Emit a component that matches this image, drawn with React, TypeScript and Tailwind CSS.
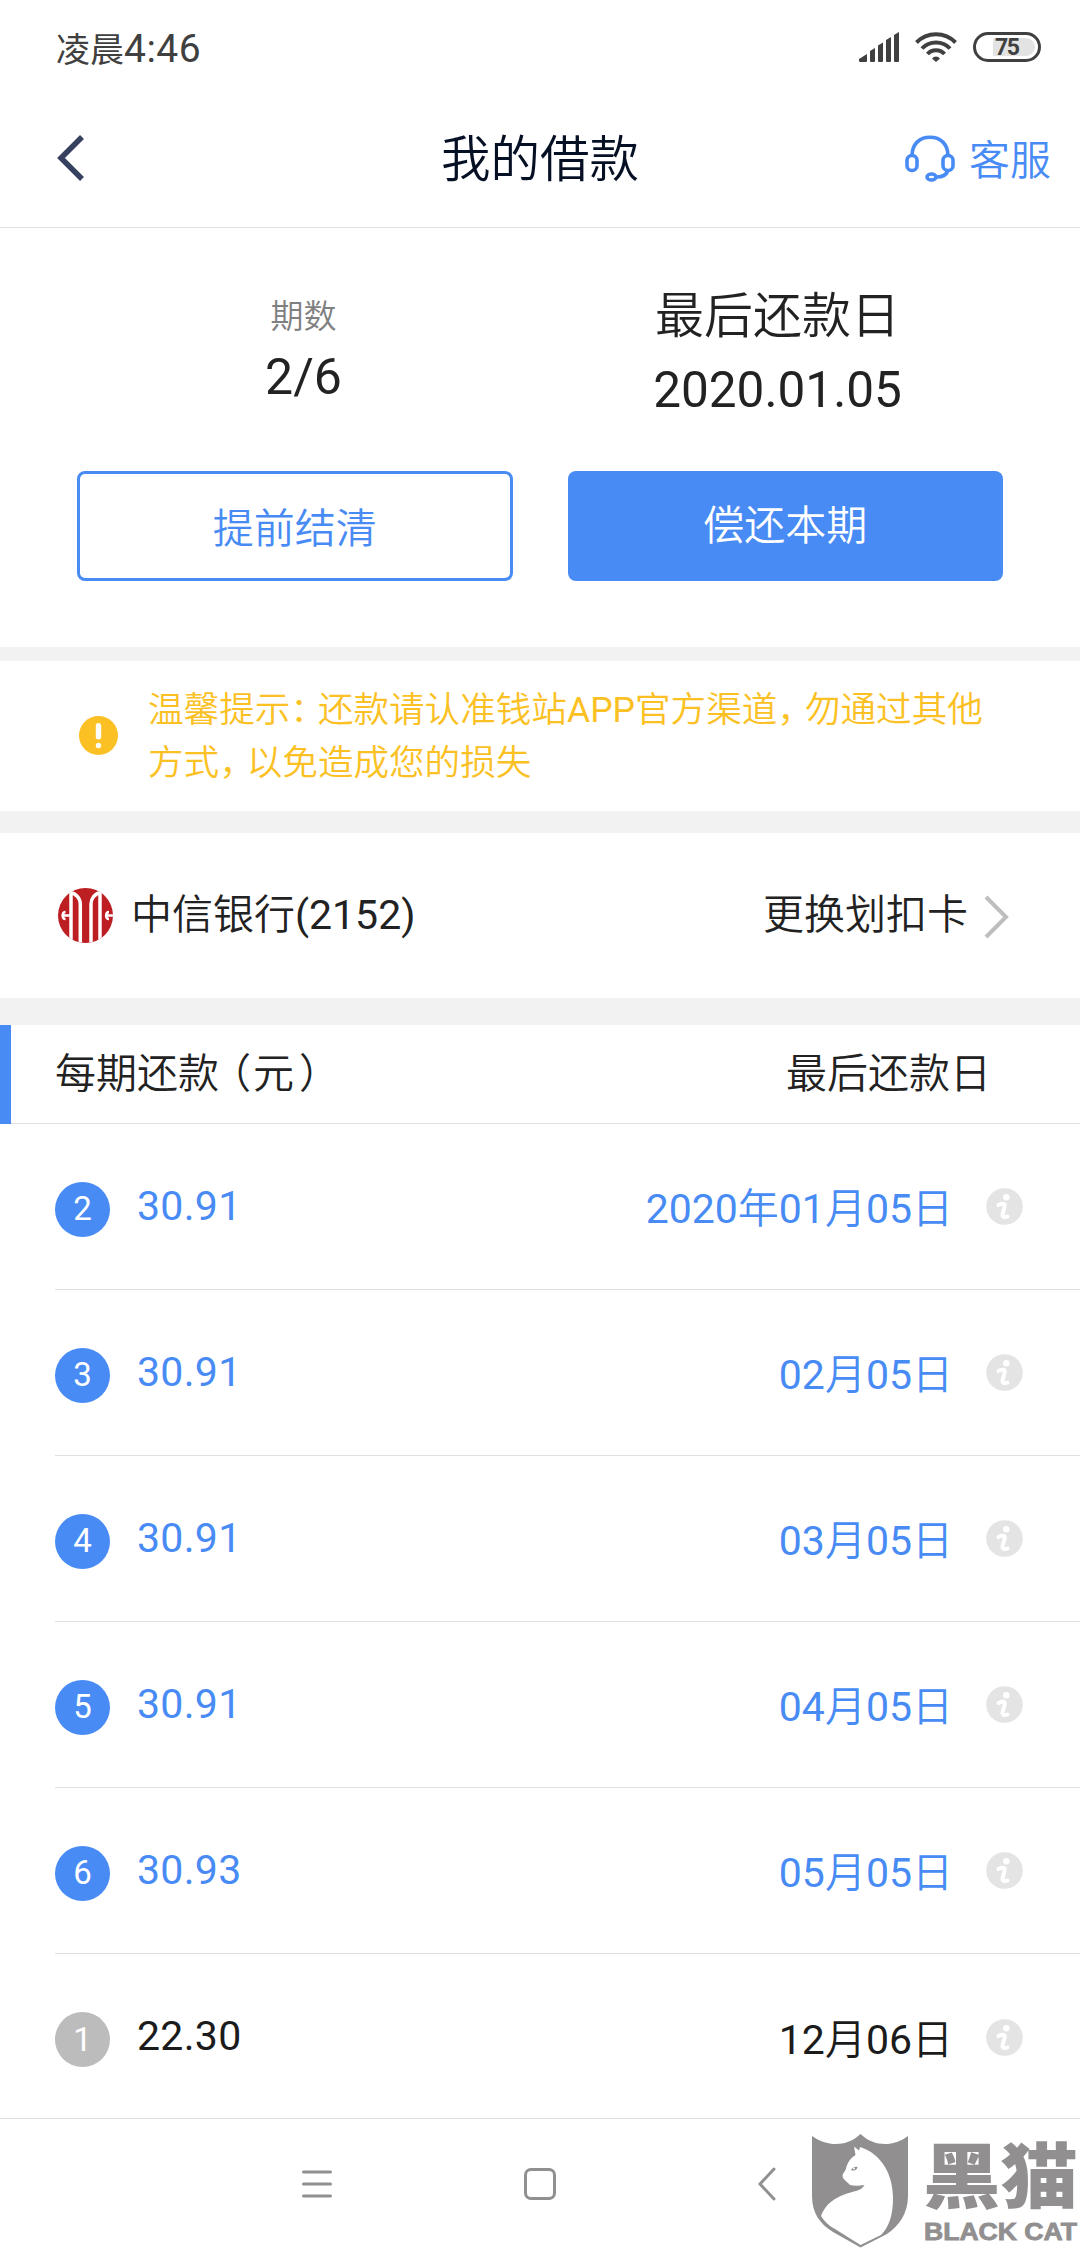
import React from 'react';

interface Repayment {
    period: number;
    amount: string;
    date: string;
    paid: boolean;
}

const repayments: Repayment[] = [
    { period: 2, amount: '30.91', date: '2020年01月05日', paid: false },
    { period: 3, amount: '30.91', date: '02月05日', paid: false },
    { period: 4, amount: '30.91', date: '03月05日', paid: false },
    { period: 5, amount: '30.91', date: '04月05日', paid: false },
    { period: 6, amount: '30.93', date: '05月05日', paid: false },
    { period: 1, amount: '22.30', date: '12月06日', paid: true },
];

const SignalIcon = () => (
    <svg className="w-10 h-[30px]" viewBox="0 0 40 30" fill="#404040">
        <path d="M0 29v-2l8-5v7a1 1 0 0 1-1 1H1a1 1 0 0 1-1-1z" />
        <path d="M11 19l5-3v13a1 1 0 0 1-1 1h-3a1 1 0 0 1-1-1z" />
        <path d="M19 13.500l5-3v18.500a1 1 0 0 1-1 1h-3a1 1 0 0 1-1-1z" />
        <path d="M27 8l5-3v24a1 1 0 0 1-1 1h-3a1 1 0 0 1-1-1z" />
        <path d="M35 3l5-3v29a1 1 0 0 1-1 1h-3a1 1 0 0 1-1-1z" />
    </svg>
);

const WifiIcon = () => (
    <svg className="w-[42px] h-[30px]" viewBox="0 0 42 30" fill="none" stroke="#404040" strokeWidth="4">
        <path d="M1.500 10.500C12 -0.500 30 -0.500 40.500 10.500" />
        <path d="M7 16.500C14.500 8.500 27.500 8.500 35 16.500" />
        <path d="M12.500 22C17 17 25 17 29.500 22" />
        <path d="M17 26.500c2-2.700 6-2.700 8 0L21 30z" fill="#404040" stroke="none" />
    </svg>
);

const HeadsetIcon = () => (
    <svg className="w-[50px] h-[48px]" viewBox="0 0 50 48" fill="none" stroke="#488bf5" strokeWidth="3.600">
        <path d="M7 21C7 9 14.500 2.300 25 2.300S43 9 43 21" />
        <rect x="2" y="20.500" width="10" height="15" rx="4.800" />
        <rect x="38" y="20.500" width="10" height="15" rx="4.800" />
        <path d="M43 35.500c-1.500 4-5 6.500-11 6.500" />
        <ellipse cx="26.500" cy="42" rx="4.500" ry="3" />
    </svg>
);

// CITIC emblem: red disc with the white gate lines cut through it
const BankLogo = () => (
    <svg className="w-[55px] h-[55px]" viewBox="0 0 55 55">
        <clipPath id="disc">
            <circle cx="27.500" cy="27.500" r="27.500" />
        </clipPath>
        <g clipPath="url(#disc)">
            <rect width="55" height="55" fill="#bd1e22" />
            <g fill="none" stroke="#fff" strokeWidth="3.500">
                <path d="M13 4v51" />
                <path d="M42 4v51" />
                <path d="M12 4.500c6.500 1 10.300 6 10.300 11.500v40" />
                <path d="M43 4.500c-6.500 1-10 6-10 11.500v40" />
                <path d="M13 27.500H5M7.500 24c-3.500 0-4 7 0 7" strokeWidth="2.600" />
                <path d="M56 27.500H48M51 24c-3.500 0-4 7 0 7" strokeWidth="2.600" />
            </g>
        </g>
    </svg>
);

const InfoIcon = () => (
    <svg className="w-[37px] h-[37px]" viewBox="0 0 37 37">
        <circle cx="18.500" cy="18.500" r="18.300" fill="#e4e4e4" />
        <circle cx="20.300" cy="9.300" r="3.200" fill="#fff" />
        <path d="M12.500 17c3.500-1.800 7-1.800 6.200 1.500l-2 7c-.8 3.200 1.300 4.300 4.800 3" fill="none" stroke="#fff" strokeWidth="4" strokeLinecap="round" />
    </svg>
);

const BlackCatShield = () => (
    <svg className="w-[98px] h-[116px]" viewBox="0 0 98 116">
        <path d="M1 3C16 14 36 14 49.500 1 63 14 83 14 97 3v60c0 17-9 30-21 38L49.500 114.500 22 99C9 91 1 80 1 63z" fill="#918f90" />
        <path d="M44.500 22L43 13.500l5 4 1-3.500C71 21 82 42 82 65c0 17-4 29-12 37L49.500 112 24 96c-6-3-11-8-14-13C16 66 33 61 45 58c4-1 7-3 8.500-6-5 .7-10 1-14.500 0-2-3-7-5-7.500-9-.2-2 2-4 3-6 2-8 5-12 10-15z" fill="#fff" />
        <path d="M40 37c2-3 4-3.500 6.500-3-.5 3-3 4.500-6.500 3z" fill="#918f90" />
        <circle cx="43" cy="35.500" r="1" fill="#fff" />
    </svg>
);

const StatusBar = () => (
    <div className="h-[96px] pl-14 pr-[39px] flex items-center justify-between text-[#404040]">
        <div className="flex items-baseline pt-[3px] leading-[48px]">
            <span className="text-[34px]">凌晨</span>
            <span className="text-[39px] tracking-[0.5px]">4:46</span>
        </div>
        <div className="flex items-center gap-4 pb-[2px]">
            <SignalIcon />
            <WifiIcon />
            <div className="w-[68px] h-[30px] rounded-full border-3 border-[#404040] p-[3px] flex">
                <div className="ml-[14px] w-[42px] h-[18px] rounded-r-full bg-[#e3e3e3] flex items-center pl-[2px] text-[23px] font-bold tracking-[-1.500px] leading-none">
                    75
                </div>
            </div>
        </div>
    </div>
);

const Header = () => (
    <div className="h-[132px] border-b border-[#e0e0e0] pb-[7px] grid grid-cols-3 items-center">
        <svg className="ml-[57px] w-[28px] h-[46px]" viewBox="0 0 28 46" fill="none" stroke="#384060" strokeWidth="5.500">
            <path d="M25 2L4 23l21 21" />
        </svg>
        <h1 className="pt-1 text-[49.500px] leading-[60px] font-[350] text-[#061024] text-center">我的借款</h1>
        <div className="mr-[29px] flex items-center justify-end gap-[14px] pt-[2px] text-[#488bf5]">
            <HeadsetIcon />
            <span className="pt-[3px] text-[41px] leading-[48px] font-[350]">客服</span>
        </div>
    </div>
);

const Summary = () => (
    <div className="h-[419px]">
        <div className="h-[243px] flex">
            <div className="w-[607px] pt-[64px] text-center">
                <p className="text-[33px] leading-[50px] font-[350] text-[#808080]">期数</p>
                <p className="text-[50px] leading-[70px] text-[#222]">2/6</p>
            </div>
            <div className="w-[341px] pt-[53px] text-center text-[#222]">
                <p className="text-[49px] leading-[72px] font-[350]">最后还款日</p>
                <p className="text-[49.500px] leading-[74px]">2020.01.05</p>
            </div>
        </div>
        <div className="px-[77px] flex gap-[55px] text-[41px] font-[350]">
            <button className="w-[436px] h-[110px] rounded-lg border-3 border-[#488bf5] pt-[7px] text-[#488bf5]">提前结清</button>
            <button className="w-[436px] h-[110px] rounded-lg bg-[#488bf5] pt-px text-white">偿还本期</button>
        </div>
    </div>
);

const Tip = () => (
    <div className="h-[150px] pl-[79px] flex items-center text-[#fbc124]">
        <svg className="-mt-[2px] w-[39px] h-[39px]" viewBox="0 0 39 39">
            <circle cx="19.500" cy="19.500" r="19.500" fill="#fbc124" />
            <rect x="16.800" y="7" width="5.400" height="16.500" rx="2.700" fill="#fff" />
            <circle cx="19.500" cy="29.500" r="2.700" fill="#fff" />
        </svg>
        <p className="ml-[30px] pt-px text-[35.600px] leading-[53px] font-[350] whitespace-nowrap">
            温馨提示<span className="tracking-[-8px]">：</span>还款请认准钱站<span className="font-normal">APP</span>官方渠道
            <span className="tracking-[-8px]">，</span>勿通过其他
            <br />
            方式<span className="tracking-[-8px]">，</span>以免造成您的损失
        </p>
    </div>
);

const BankCard = () => (
    <div className="h-[165px] pl-[58px] pr-[71px] flex items-center text-[41px] leading-[50px] text-[#222]">
        <BankLogo />
        <span className="ml-[18px] -mt-[2px] flex-1">
            <span className="font-[350]">中信银行</span>(2152)
        </span>
        <span className="-mt-[2px] font-[350]">更换划扣卡</span>
        <svg className="ml-[15px] mt-[2px] w-[26px] h-[44px]" viewBox="0 0 26 44" fill="none" stroke="#bebebe" strokeWidth="4">
            <path d="M3 2l20 20L3 42" />
        </svg>
    </div>
);

const RepaymentRow: React.FC<{ item: Repayment; last: boolean }> = ({ item, last }) => (
    <li className={`ml-[55px] h-[166px] flex items-center pr-[57px] text-[41px] leading-[50px] ${last ? '' : 'border-b border-[#e0e0e0]'} ${item.paid ? 'text-[#1b1b1b]' : 'text-[#488bf5]'}`}>
        <span className={`w-[55px] h-[55px] mt-[5px] rounded-full flex items-center justify-center text-[33px] text-white ${item.paid ? 'bg-[#bcbcbc]' : 'bg-[#488bf5]'}`}>
            {item.period}
        </span>
        <span className="ml-[27px] -mt-[2px] flex-1 tracking-[0.3px]">{item.amount}</span>
        <span className="mr-[33px] mt-[5px]">
            {item.date.split(/([年月日])/).map((part, index) => (
                <span key={index} className={/\d/.test(part) ? 'font-normal' : 'font-[350]'}>{part}</span>
            ))}
        </span>
        <InfoIcon />
    </li>
);

const SystemNav = () => (
    <div className="relative h-[130px] border-t border-[#e0e0e0]">
        <div className="h-full flex items-center pl-[302px]">
            <svg className="w-[30px] h-[32px]" viewBox="0 0 30 32" stroke="#909090" strokeWidth="3" strokeLinecap="round">
                <path d="M1.500 4h27M1.500 16h27M1.500 28h27" />
            </svg>
            <svg className="ml-48 w-[32px] h-[32px]" viewBox="0 0 32 32" fill="none" stroke="#909090" strokeWidth="3">
                <rect x="1.500" y="1.500" width="29" height="29" rx="5.500" />
            </svg>
            <svg className="ml-[202px] w-[18px] h-[34px]" viewBox="0 0 18 34" fill="none" stroke="#909090" strokeWidth="3" strokeLinecap="round">
                <path d="M16 2L2 17l14 15" />
            </svg>
        </div>
        {/* Brand mark floats over the navigation bar */}
        <div className="absolute left-[811px] top-[14px] flex text-[#918f90]">
            <BlackCatShield />
            <svg className="ml-[14px] w-[157px] h-[116px] overflow-visible" viewBox="0 0 157 116" fill="#918f90">
                <text x="0" y="69" fontSize="71" fontWeight="900" textLength="155" lengthAdjust="spacingAndGlyphs">黑猫</text>
                <text x="1" y="107" fontSize="23" fontWeight="700" stroke="#918f90" strokeWidth="0.800" textLength="153" lengthAdjust="spacingAndGlyphs" className="font-['Liberation_Sans',sans-serif]">BLACK CAT</text>
            </svg>
        </div>
    </div>
);

const App: React.FC = () => {
    return (
        <div className="w-[1080px] h-[2248px] overflow-hidden bg-white flex flex-col font-[Roboto,'Noto_Sans_CJK_SC',sans-serif]">
            <StatusBar />
            <Header />
            <Summary />
            <div className="h-[14px] bg-[#f2f2f2]" />
            <Tip />
            <div className="h-[22px] bg-[#f2f2f2]" />
            <BankCard />
            <div className="h-[27px] bg-[#f2f2f2]" />

            {/* Repayment schedule */}
            <div className="h-[99px] flex text-[41px] leading-[50px] font-[350] text-[#222]">
                <div className="w-[11px] bg-[#488bf5]" />
                <div className="flex-1 border-b border-[#e0e0e0] pl-[44px] pr-[89px] pb-px flex items-center justify-between">
                    <span>
                        每期还<span className="tracking-[-9px]">款</span><span className="tracking-[2px]">（</span><span className="tracking-[5px]">元</span>）
                    </span>
                    <span>最后还款日</span>
                </div>
            </div>
            <ul className="h-[994px]">
                {repayments.map((item, index) => (
                    <RepaymentRow key={item.period} item={item} last={index === repayments.length - 1} />
                ))}
            </ul>

            <SystemNav />
        </div>
    );
};

export default App;
